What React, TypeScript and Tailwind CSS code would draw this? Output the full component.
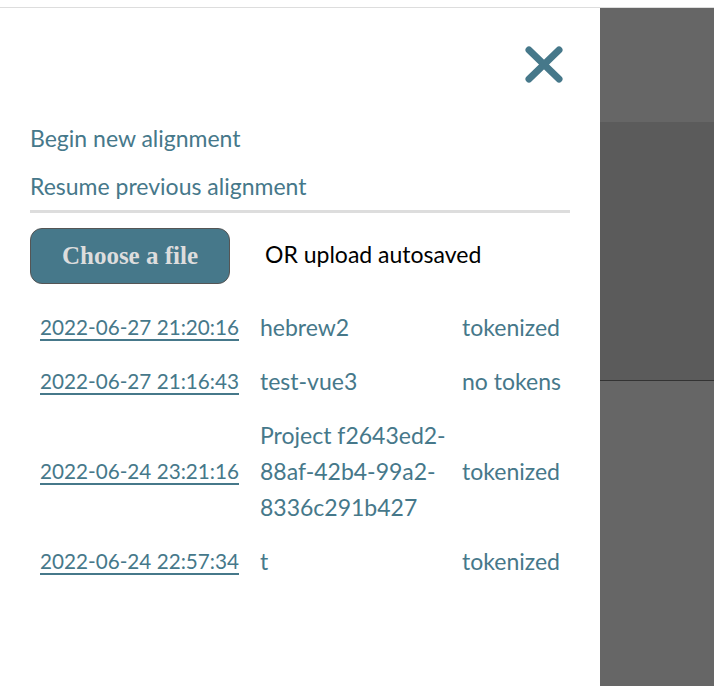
import React from "react";

const ROWS = [
  { date: "2022-06-27 21:20:16", name: ["hebrew2"], status: "tokenized" },
  { date: "2022-06-27 21:16:43", name: ["test-vue3"], status: "no tokens" },
  { date: "2022-06-24 23:21:16", name: ["Project f2643ed2-", "88af-42b4-99a2-", "8336c291b427"], status: "tokenized" },
  { date: "2022-06-24 22:57:34", name: ["t"], status: "tokenized" },
];

function CloseIcon() {
  return (
    <svg width="38" height="37" viewBox="0 0 38 37" fill="none">
      <path d="M4 4L34 33M34 4L4 33" stroke="#46788a" strokeWidth="7" strokeLinecap="round" />
    </svg>
  );
}

export default function App() {
  return (
    <div className="w-[714px] h-[686px] bg-white font-['Lato',sans-serif] text-[23px] text-[#46788a] overflow-hidden">
      <div className="h-[7px]" />
      <div className="h-px bg-[#dddddd]" />
      <div className="flex h-[678px]">
        {/* Sidebar */}
        <div className="w-[600px] px-[30px]">
          <div className="flex justify-end pt-[38px] pr-[7px]">
            <button className="block">
              <CloseIcon />
            </button>
          </div>

          <div className="mt-[31px]">
            <div className="h-[48px] leading-[48px]">Begin new alignment</div>
            <div className="h-[48px] leading-[48px]">Resume previous alignment</div>
          </div>
          <div className="h-[3px] bg-[#dddddd]" />

          <div className="mt-[15px] flex items-center">
            <button className="w-[200px] h-[56px] rounded-[12px] border border-[#555555] bg-[#46788a] text-[#dddddd] font-['Liberation_Serif',serif] font-bold text-[25px]">
              Choose a file
            </button>
            <span className="ml-[35px] mb-[4px] text-black">OR upload autosaved</span>
          </div>

          {/* Autosaved list */}
          <div className="mt-[16px] grid grid-cols-[220px_202px_118px] leading-[36px]">
            {ROWS.map((r) => (
              <React.Fragment key={r.date}>
                <div className="flex items-center px-[10px] py-[9px] whitespace-nowrap">
                  <a href="#" className="text-[20.7px] underline underline-offset-[4px] decoration-[2px]">
                    {r.date}
                  </a>
                </div>
                <div className="flex flex-col justify-center px-[10px] py-[9px] whitespace-nowrap">
                  {r.name.map((line) => (
                    <span key={line}>{line}</span>
                  ))}
                </div>
                <div className="flex items-center px-[10px] py-[9px] whitespace-nowrap">{r.status}</div>
              </React.Fragment>
            ))}
          </div>
        </div>

        {/* Dimmed page behind */}
        <div className="flex-1 flex flex-col">
          <div className="h-[114px] bg-[#666666]" />
          <div className="h-[258px] bg-[#5b5b5b]" />
          <div className="h-px bg-[#333333]" />
          <div className="flex-1 bg-[#666666]" />
        </div>
      </div>
    </div>
  );
}
